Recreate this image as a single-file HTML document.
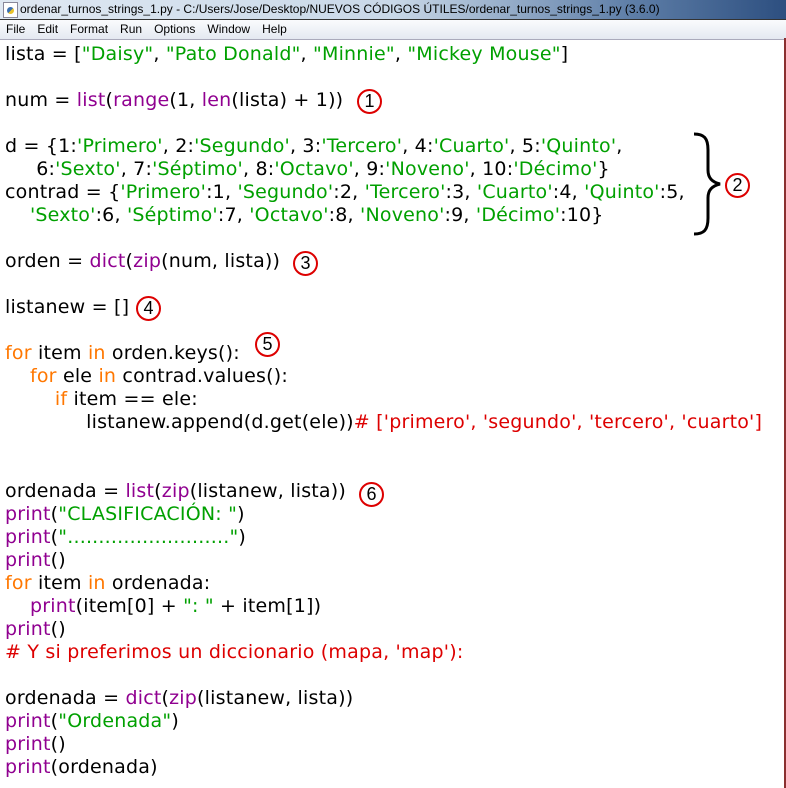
<!DOCTYPE html>
<html><head><meta charset="utf-8"><style>
body{margin:0;width:786px;height:788px;overflow:hidden;background:#fff;position:relative;font-family:"DejaVu Sans",Verdana,sans-serif;}
.title{position:absolute;left:0;top:0;width:786px;height:19px;background:linear-gradient(90deg,#dfe8f2 0%,#c9d8e8 50%,#5f7fa8 80%,#2d4f80 100%);font:12px "Liberation Sans",sans-serif;line-height:19px;color:#000;}
.title span{position:absolute;left:20px;top:0;}
.icon{position:absolute;left:3px;top:2px;width:13px;height:14px;background:#fff;border:1px solid #889;}
.icon:after{content:"";position:absolute;left:3px;top:4px;width:7px;height:7px;border-radius:50%;background:linear-gradient(135deg,#3a6fb0 50%,#e8c22a 50%);}
.menu{position:absolute;left:0;top:19px;width:786px;height:19px;background:linear-gradient(#fafbfd,#e4e9f1);border-top:1px solid #333;border-bottom:1px solid #aab;font:12px "Liberation Sans",sans-serif;line-height:19px;}
.menu span{margin-left:6px;margin-right:6px;}
.code{position:absolute;left:5px;top:43px;font-size:19px;line-height:23px;white-space:pre;color:#000;letter-spacing:0.2px;}
.s{color:#00a000}.k{color:#ff7700}.b{color:#900090}.c{color:#dd0000}
.n{position:absolute;width:21px;height:21px;border:2px solid #d00;border-radius:50%;font:18px "Liberation Sans",sans-serif;line-height:21px;text-align:center;color:#000;box-sizing:content-box;}
.edge{position:absolute;right:0;top:38px;width:2px;height:750px;background:#8a3030;}
</style></head><body>
<div class="title"><div class="icon"></div><span>ordenar_turnos_strings_1.py - C:/Users/Jose/Desktop/NUEVOS CÓDIGOS ÚTILES/ordenar_turnos_strings_1.py (3.6.0)</span></div>
<div class="menu"><span>File</span><span>Edit</span><span>Format</span><span>Run</span><span>Options</span><span>Window</span><span>Help</span></div>
<div class="edge"></div>
<div class="code">lista = [<span class="s">"Daisy"</span>, <span class="s">"Pato Donald"</span>, <span class="s">"Minnie"</span>, <span class="s">"Mickey Mouse"</span>]

num = <span class="b">list</span>(<span class="b">range</span>(1, <span class="b">len</span>(lista) + 1))

d = {1:<span class="s">'Primero'</span>, 2:<span class="s">'Segundo'</span>, 3:<span class="s">'Tercero'</span>, 4:<span class="s">'Cuarto'</span>, 5:<span class="s">'Quinto'</span>,
     6:<span class="s">'Sexto'</span>, 7:<span class="s">'Séptimo'</span>, 8:<span class="s">'Octavo'</span>, 9:<span class="s">'Noveno'</span>, 10:<span class="s">'Décimo'</span>}
contrad = {<span class="s">'Primero'</span>:1, <span class="s">'Segundo'</span>:2, <span class="s">'Tercero'</span>:3, <span class="s">'Cuarto'</span>:4, <span class="s">'Quinto'</span>:5,
    <span class="s">'Sexto'</span>:6, <span class="s">'Séptimo'</span>:7, <span class="s">'Octavo'</span>:8, <span class="s">'Noveno'</span>:9, <span class="s">'Décimo'</span>:10}

orden = <span class="b">dict</span>(<span class="b">zip</span>(num, lista))

listanew = []

<span class="k">for</span> item <span class="k">in</span> orden.keys():
    <span class="k">for</span> ele <span class="k">in</span> contrad.values():
        <span class="k">if</span> item == ele:
             listanew.append(d.get(ele))<span class="c"># ['primero', 'segundo', 'tercero', 'cuarto']</span>


ordenada = <span class="b">list</span>(<span class="b">zip</span>(listanew, lista))
<span class="b">print</span>(<span class="s">"CLASIFICACIÓN: "</span>)
<span class="b">print</span>(<span class="s">".........................."</span>)
<span class="b">print</span>()
<span class="k">for</span> item <span class="k">in</span> ordenada:
    <span class="b">print</span>(item[0] + <span class="s">": "</span> + item[1])
<span class="b">print</span>()
<span class="c"># Y si preferimos un diccionario (mapa, 'map'):</span>

ordenada = <span class="b">dict</span>(<span class="b">zip</span>(listanew, lista))
<span class="b">print</span>(<span class="s">"Ordenada"</span>)
<span class="b">print</span>()
<span class="b">print</span>(ordenada)</div>
<div class="n" style="left:357px;top:89px">1</div>
<div class="n" style="left:725px;top:173px">2</div>
<div class="n" style="left:293px;top:251px">3</div>
<div class="n" style="left:136px;top:296px">4</div>
<div class="n" style="left:255px;top:332px">5</div>
<div class="n" style="left:359px;top:482px">6</div>
<svg style="position:absolute;left:690px;top:132px" width="34" height="104" viewBox="0 0 34 104">
<path d="M4 2 C14 2 18 6 18 18 L18 38 C18 46 22 50 30 52 C22 54 18 58 18 66 L18 86 C18 98 14 102 4 102" fill="none" stroke="#000" stroke-width="3"/>
</svg>
</body></html>
